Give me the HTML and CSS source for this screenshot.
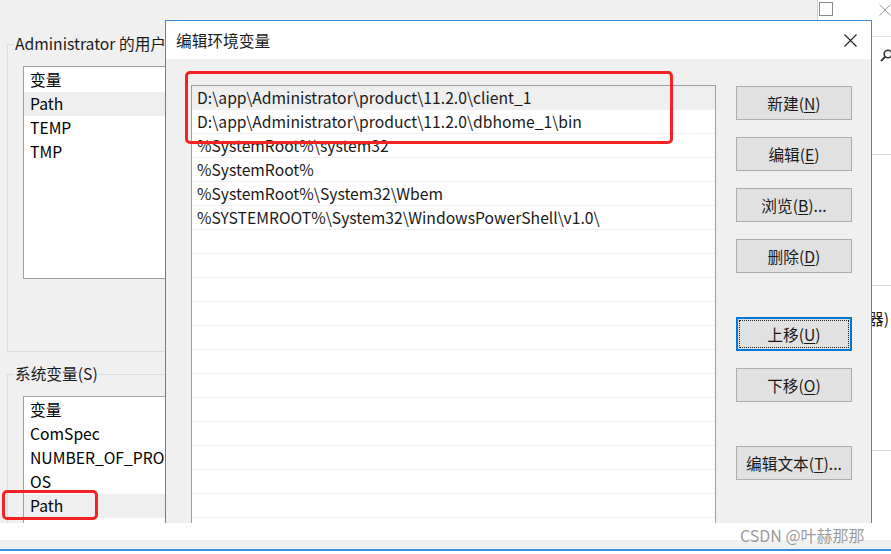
FILE: index.html
```html
<!DOCTYPE html>
<html lang="zh-CN">
<head>
    <meta charset="UTF-8">
    <title>编辑环境变量</title>
    <link rel="stylesheet" href="styles.css">
</head>
<body>
    <div class="desktop">
        <div class="stage">
            <!-- window behind: environment variables -->
            <div class="back-window">
                <fieldset class="group group-user">
                    <legend>Administrator 的用户变量(U)</legend>
                    <div class="listbox listbox-user">
                        <div class="lv-row lv-head">变量</div>
                        <div class="lv-row selected">Path</div>
                        <div class="lv-row">TEMP</div>
                        <div class="lv-row">TMP</div>
                    </div>
                </fieldset>
                <fieldset class="group group-system">
                    <legend>系统变量(S)</legend>
                    <div class="listbox listbox-system">
                        <div class="lv-row lv-head">变量</div>
                        <div class="lv-row">ComSpec</div>
                        <div class="lv-row">NUMBER_OF_PROCESSORS</div>
                        <div class="lv-row">OS</div>
                        <div class="lv-row selected">Path</div>
                    </div>
                </fieldset>
            </div>

            <!-- system properties window at the far right -->
            <div class="side-window">
                <div class="side-title">
                    <span class="max-box"></span>
                    <svg class="side-close" width="12" height="12" viewBox="0 0 12 12">
                        <path d="M0.5 0.5 L11.5 11.5 M11.5 0.5 L0.5 11.5" stroke="#9a9a9a" stroke-width="1" fill="none"/>
                    </svg>
                </div>
                <div class="side-search">
                    <svg width="13" height="13" viewBox="0 0 13 13">
                        <circle cx="8" cy="5" r="3.8" stroke="#333" stroke-width="1.6" fill="none"/>
                        <path d="M5.3 7.7 L1 12" stroke="#333" stroke-width="1.8"/>
                    </svg>
                </div>
                <div class="side-sect side-sect-a"></div>
                <div class="side-sect side-sect-b"></div>
                <div class="side-sect side-sect-c"><span class="side-text">处理器)</span></div>
            </div>

            <!-- edit dialog -->
            <div class="dialog">
                <div class="dialog-title">
                    <span>编辑环境变量</span>
                    <svg class="dialog-close" width="13" height="13" viewBox="0 0 13 13">
                        <path d="M0.5 0.5 L12.5 12.5 M12.5 0.5 L0.5 12.5" stroke="#222" stroke-width="1.1" fill="none"/>
                    </svg>
                </div>
                <div class="dialog-body">
                    <div class="path-list">
                        <div class="path-row selected">D:\app\Administrator\product\11.2.0\client_1</div>
                        <div class="path-row">D:\app\Administrator\product\11.2.0\dbhome_1\bin</div>
                        <div class="path-row">%SystemRoot%\system32</div>
                        <div class="path-row">%SystemRoot%</div>
                        <div class="path-row">%SystemRoot%\System32\Wbem</div>
                        <div class="path-row">%SYSTEMROOT%\System32\WindowsPowerShell\v1.0\</div>
                        <div class="path-row"></div>
                        <div class="path-row"></div>
                        <div class="path-row"></div>
                        <div class="path-row"></div>
                        <div class="path-row"></div>
                        <div class="path-row"></div>
                        <div class="path-row"></div>
                        <div class="path-row"></div>
                        <div class="path-row"></div>
                        <div class="path-row"></div>
                        <div class="path-row"></div>
                        <div class="path-row"></div>
                    </div>
                    <div class="button-col">
                        <button class="btn">新建(<u>N</u>)</button>
                        <button class="btn">编辑(<u>E</u>)</button>
                        <button class="btn">浏览(<u>B</u>)...</button>
                        <button class="btn">删除(<u>D</u>)</button>
                        <button class="btn btn-focus btn-gap">上移(<u>U</u>)</button>
                        <button class="btn">下移(<u>O</u>)</button>
                        <button class="btn btn-gap">编辑文本(<u>T</u>)...</button>
                    </div>
                </div>
            </div>

            <!-- red annotation boxes -->
            <div class="mark mark-paths"></div>
            <div class="mark mark-path"></div>
        </div>
        <div class="bottom-strip">
            <div class="bottom-bar"></div>
        </div>
        <div class="watermark">CSDN @叶赫那那</div>
    </div>
</body>
</html>
```

FILE: styles.css
```css
body {
    margin: 0;
    padding: 0;
    background-color: #ffffff;
    font-family: "Noto Sans CJK SC", "Noto Sans", sans-serif;
    font-size: 15.7px;
    color: #000;
    overflow: hidden;
}

.desktop {
    position: relative;
    width: 891px;
    height: 554px;
    display: flex;
    flex-direction: column;
}

.stage {
    position: relative;
    height: 523px;
    flex-shrink: 0;
    overflow: hidden;
}

/* back window */
.back-window {
    position: absolute;
    left: 0;
    top: 0;
    width: 818px;
    height: 523px;
    background-color: #f0f0f0;
    border-right: 1px solid #d4d4d4;
    box-sizing: border-box;
    padding: 34px 0 0 7px;
}

.group {
    margin: 0;
    padding: 0 15px;
    width: 800px;
    box-sizing: border-box;
    border: 1px solid #dcdcdc;
}

.group legend {
    padding: 0 1px;
    margin-left: -9px;
    line-height: 20px;
    color: #1a1a1a;
    white-space: nowrap;
}

.group-user {
    height: 318px;
}

.group-system {
    margin-top: 12px;
    height: 200px;
}

.listbox {
    background-color: #fff;
    border: 1px solid #a0a0a0;
    padding-top: 1px;
}

.listbox-user {
    margin-top: 12px;
    height: 210px;
}

.listbox-system {
    margin-top: 12px;
    height: 140px;
}

.lv-row {
    height: 24px;
    line-height: 24px;
    padding-left: 6px;
    white-space: nowrap;
}

.lv-row.selected {
    background-color: #efefef;
}

/* window at the right edge */
.side-window {
    position: absolute;
    left: 818px;
    top: 0;
    width: 73px;
    height: 523px;
    background-color: #fff;
}

.side-title {
    height: 37px;
    position: relative;
    border-bottom: 1px solid #e6e6e6;
    box-sizing: border-box;
}

.max-box {
    position: absolute;
    left: 1px;
    top: 2px;
    width: 12px;
    height: 12px;
    border: 1px solid #8a8a8a;
}

.side-close {
    position: absolute;
    left: 61px;
    top: 4px;
}

.side-search {
    height: 25px;
    padding: 7px 0 0 62px;
    box-sizing: border-box;
}

.side-sect {
    border-bottom: 1px solid #d9d9d9;
}

.side-sect-a {
    height: 92px;
}

.side-sect-b {
    height: 130px;
}

.side-sect-c {
    height: 165px;
    display: flex;
    justify-content: flex-end;
    padding-top: 22px;
    box-sizing: border-box;
}

.side-text {
    padding-right: 2px;
    line-height: 22px;
    color: #1a1a1a;
}

/* edit dialog */
.dialog {
    position: absolute;
    left: 165px;
    top: 20px;
    width: 707px;
    height: 510px;
    border: 1px solid #3c8ad8;
    box-sizing: border-box;
    background-color: #f0f0f0;
    display: flex;
    flex-direction: column;
}

.dialog-title {
    height: 38px;
    flex-shrink: 0;
    background-color: #fff;
    display: flex;
    align-items: center;
    justify-content: space-between;
    padding: 0 14px 0 10px;
}

.dialog-title span {
    color: #1a1a1a;
}

.dialog-body {
    display: flex;
    padding: 26px 19px 0 25px;
    gap: 20px;
    flex: 1;
    min-height: 0;
}

.path-list {
    width: 525px;
    flex-shrink: 0;
    background-color: #fff;
    border: 1px solid #a0a0a0;
    box-sizing: border-box;
    overflow: hidden;
}

.path-row {
    height: 24px;
    line-height: 23px;
    padding-left: 5px;
    border-bottom: 1px solid #f0f0f0;
    box-sizing: border-box;
    white-space: nowrap;
    color: #1a1a1a;
}

.path-row.selected {
    background-color: #efefef;
}

.button-col {
    display: flex;
    flex-direction: column;
    gap: 17px;
    padding-top: 1px;
}

.btn {
    width: 116px;
    height: 34px;
    background-color: #e1e1e1;
    border: 1px solid #adadad;
    font-family: inherit;
    font-size: 15.7px;
    color: #1a1a1a;
    padding: 0;
}

.btn u {
    text-decoration-thickness: 1px;
    text-underline-offset: 2px;
}

.btn-gap {
    margin-top: 27px;
}

.btn-focus {
    border: 2px solid #0078d7;
    outline: 1px dotted #222;
    outline-offset: -4px;
}

/* red annotation boxes */
.mark {
    position: absolute;
    border: 3px solid #f52222;
    border-radius: 5px;
}

.mark-paths {
    left: 185px;
    top: 71px;
    width: 482px;
    height: 67px;
}

.mark-path {
    left: 2px;
    top: 490px;
    width: 90px;
    height: 24px;
}

.watermark {
    position: absolute;
    left: 740px;
    top: 524px;
    font-size: 16px;
    line-height: 22px;
    color: #9a9a9a;
    white-space: nowrap;
}

/* bottom strip */
.bottom-strip {
    height: 31px;
    padding-top: 17px;
    box-sizing: border-box;
    background-color: #fff;
}

.bottom-bar {
    height: 9px;
    background-color: #f0f0f0;
    border-bottom: 2px solid #3a8ee0;
}
```
